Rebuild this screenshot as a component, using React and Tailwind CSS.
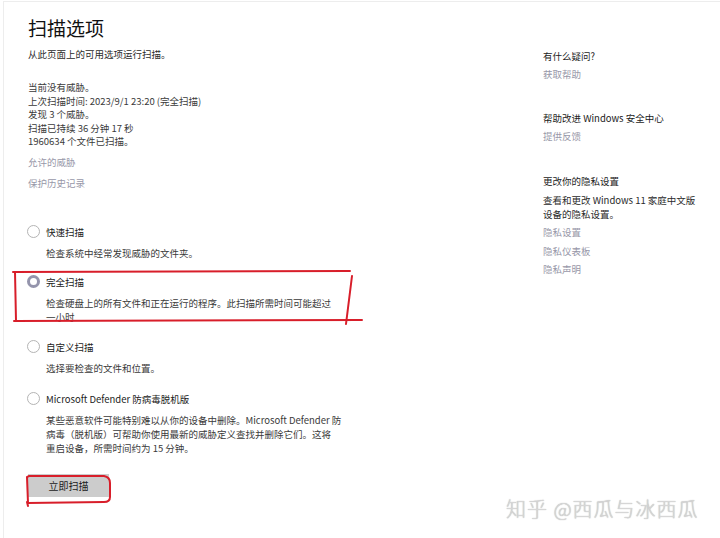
import React from 'react';

const font = { fontFamily: '"Noto Sans CJK SC", "Noto Sans", sans-serif' };

const Radio = ({ checked }) => (
  <span
    className={`w-[13px] h-[13px] rounded-full bg-white shrink-0 ${
      checked ? 'border-[3px] border-[#9494ac]' : 'border border-[#b4b4b4]'
    }`}
  />
);

const ScanOption = ({ label, checked, lines, gapTop }) => (
  <div className={gapTop}>
    <div className="flex items-center gap-[6px] ml-[-1px] h-[14px] leading-[14px] text-[#1b1b1b]">
      <Radio checked={checked} />
      <span>{label}</span>
    </div>
    <div className="ml-[18px] mt-[7px] leading-[14px] text-[#3a3a3a]">
      {lines.map((l) => (
        <div key={l} className="whitespace-nowrap">{l}</div>
      ))}
    </div>
  </div>
);

const SideLink = ({ children, className = '' }) => (
  <div className={`leading-[14px] text-[#9797a8] ${className}`}>{children}</div>
);

export default function App() {
  return (
    <div className="relative w-[720px] h-[538px] bg-white overflow-hidden text-[9.5px]" style={font}>
      <div className="ml-[3px] mt-[1px] h-[537px] border-l border-t border-[#ededed] flex">
        {/* left column */}
        <div className="pl-[24px] w-[515px]">
          <h1 className="mt-[14px] text-[19px] leading-[24px] text-[#111]">扫描选项</h1>
          <p className="mt-[7px] leading-[14px] text-[#2a2a2a]">从此页面上的可用选项运行扫描。</p>

          <div className="mt-[20px] leading-[13.5px] text-[#3a3a3a]">
            <div>当前没有威胁。</div>
            <div>上次扫描时间: 2023/9/1 23:20 (完全扫描)</div>
            <div>发现 3 个威胁。</div>
            <div>扫描已持续 36 分钟 17 秒</div>
            <div>1960634 个文件已扫描。</div>
          </div>

          <SideLink className="mt-[6px]">允许的威胁</SideLink>
          <SideLink className="mt-[7px]">保护历史记录</SideLink>

          <ScanOption gapTop="mt-[35px]" label="快速扫描" lines={['检查系统中经常发现威胁的文件夹。']} />
          <ScanOption
            gapTop="mt-[15px]"
            label="完全扫描"
            checked
            lines={['检查硬盘上的所有文件和正在运行的程序。此扫描所需时间可能超过', '一小时']}
          />
          <ScanOption gapTop="mt-[16px]" label="自定义扫描" lines={['选择要检查的文件和位置。']} />
          <ScanOption
            gapTop="mt-[17px]"
            label="Microsoft Defender 防病毒脱机版"
            lines={[
              '某些恶意软件可能特别难以从你的设备中删除。Microsoft Defender 防',
              '病毒（脱机版）可帮助你使用最新的威胁定义查找并删除它们。这将',
              '重启设备，所需时间约为 15 分钟。',
            ]}
          />

          <button className="mt-[19px] w-[81px] h-[23px] bg-[#cccccc] text-[#1b1b1b] text-[10px] leading-[23px]">
            立即扫描
          </button>
        </div>

        {/* right column */}
        <div className="pl-[24px] pt-[47px] text-[#1b1b1b]">
          <div className="leading-[14px]">有什么疑问?</div>
          <SideLink className="mt-[4px]">获取帮助</SideLink>

          <div className="mt-[30px] leading-[14px]">帮助改进 Windows 安全中心</div>
          <SideLink className="mt-[4px]">提供反馈</SideLink>

          <div className="mt-[31px] leading-[14px]">更改你的隐私设置</div>
          <div className="mt-[6px] leading-[13.5px] text-[#2a2a2a]">
            <div>查看和更改 Windows 11 家庭中文版</div>
            <div>设备的隐私设置。</div>
          </div>
          <SideLink className="mt-[4px]">隐私设置</SideLink>
          <SideLink className="mt-[5px]">隐私仪表板</SideLink>
          <SideLink className="mt-[4px]">隐私声明</SideLink>
        </div>
      </div>

      {/* red hand-drawn marks */}
      <svg className="absolute left-0 top-0 pointer-events-none" width="720" height="538">
        <g stroke="#d81e2a" strokeWidth="2" fill="none" strokeLinecap="round">
          <path d="M13 272 L350 271" />
          <path d="M15 272 L16 321" />
          <path d="M14 321 L362 320" />
          <path d="M352 276 L346 324" />
          <path d="M29 476 L104 476 Q110 477 110 483 L110 497 Q110 502 104 502 L28 503 L27 477 Z" />
          <path d="M27 502 L28 506" />
        </g>
      </svg>

      {/* watermark */}
      <div
        className="absolute left-[506px] top-[496px] text-[20px] leading-[26px] tracking-[1px] font-light text-[#d6d6d6] whitespace-nowrap"
        style={{ textShadow: '0 0 1px #a8a8a8' }}
      >
        知乎 @西瓜与冰西瓜
      </div>
    </div>
  );
}
